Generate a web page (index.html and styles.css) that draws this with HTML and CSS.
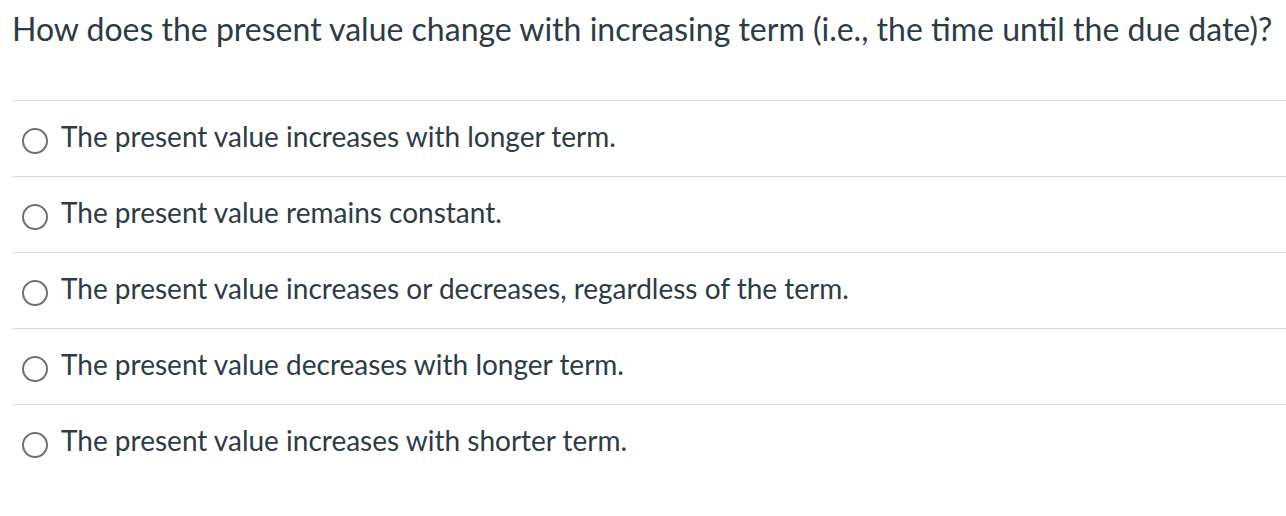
FILE: index.html
```html
<!DOCTYPE html>
<html>
<head>
<meta charset="utf-8">
<link rel="stylesheet" href="styles.css">
</head>
<body>
<div class="question">
  <div class="prompt">How does the present value change with increasing term (i.e., the time until the due date)?</div>
  <div class="answers">
    <label class="answer"><span class="radio"></span><span class="text">The present value increases with longer term.</span></label>
    <label class="answer"><span class="radio"></span><span class="text">The present value remains constant.</span></label>
    <label class="answer"><span class="radio"></span><span class="text">The present value increases or decreases, regardless of the term.</span></label>
    <label class="answer"><span class="radio"></span><span class="text">The present value decreases with longer term.</span></label>
    <label class="answer"><span class="radio"></span><span class="text">The present value increases with shorter term.</span></label>
  </div>
</div>
</body>
</html>
```
FILE: styles.css
```css
html, body {
  margin: 0;
  padding: 0;
  background: #ffffff;
}
body {
  font-family: Lato, "Open Sans", sans-serif;
  color: #2d3b45;
}
.question {
  padding-left: 12px;
}
.prompt {
  font-size: 32px;
  line-height: 40px;
  padding-top: 9px;
  height: 100px;
  box-sizing: border-box;
  white-space: nowrap;
}
.answers {
  display: flex;
  flex-direction: column;
}
.answer {
  display: flex;
  align-items: center;
  height: 76px;
  box-sizing: border-box;
  border-top: 1px solid #dadcde;
  padding-left: 10px;
}
.radio {
  width: 22px;
  height: 22px;
  border: 2px solid #707070;
  border-radius: 50%;
  flex: none;
  margin-top: 4px;
}
.text {
  font-size: 28px;
  line-height: 34px;
  margin-left: 13px;
  margin-bottom: 6px;
}
```
